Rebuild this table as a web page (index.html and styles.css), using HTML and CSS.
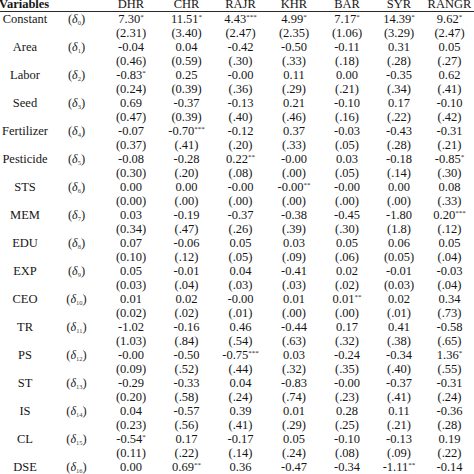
FILE: index.html
```html
<!DOCTYPE html>
<html>
<head>
<meta charset="utf-8">
<link rel="stylesheet" href="styles.css">
</head>
<body>
<div class="tbl">
  <div class="row head"><span class="vh">Variables</span><span></span><span>DHR</span><span>CHR</span><span>RAJR</span><span>KHR</span><span>BAR</span><span>SYR</span><span>RANGR</span></div>
  <div class="body">
    <div class="row"><span>Constant</span><span class="d">(<i>δ</i><sub>0</sub>)</span><span>7.30<sup>*</sup></span><span>11.51<sup>*</sup></span><span>4.43<sup>***</sup></span><span>4.99<sup>*</sup></span><span>7.17<sup>*</sup></span><span>14.39<sup>*</sup></span><span>9.62<sup>*</sup></span></div>
    <div class="row"><span></span><span></span><span>(2.31)</span><span>(3.40)</span><span>(2.47)</span><span>(2.35)</span><span>(1.06)</span><span>(3.29)</span><span>(2.47)</span></div>

    <div class="row"><span>Area</span><span class="d">(<i>δ</i><sub>1</sub>)</span><span>-0.04</span><span>0.04</span><span>-0.42</span><span>-0.50</span><span>-0.11</span><span>0.31</span><span>0.05</span></div>
    <div class="row"><span></span><span></span><span>(0.46)</span><span>(0.59)</span><span>(.30)</span><span>(.33)</span><span>(.18)</span><span>(.28)</span><span>(.27)</span></div>

    <div class="row"><span>Labor</span><span class="d">(<i>δ</i><sub>2</sub>)</span><span>-0.83<sup>*</sup></span><span>0.25</span><span>-0.00</span><span>0.11</span><span>0.00</span><span>-0.35</span><span>0.62</span></div>
    <div class="row"><span></span><span></span><span>(0.24)</span><span>(0.39)</span><span>(.36)</span><span>(.29)</span><span>(.21)</span><span>(.34)</span><span>(.41)</span></div>

    <div class="row"><span>Seed</span><span class="d">(<i>δ</i><sub>3</sub>)</span><span>0.69</span><span>-0.37</span><span>-0.13</span><span>0.21</span><span>-0.10</span><span>0.17</span><span>-0.10</span></div>
    <div class="row"><span></span><span></span><span>(0.47)</span><span>(0.39)</span><span>(.40)</span><span>(.46)</span><span>(.16)</span><span>(.22)</span><span>(.42)</span></div>

    <div class="row"><span>Fertilizer</span><span class="d">(<i>δ</i><sub>4</sub>)</span><span>-0.07</span><span>-0.70<sup>***</sup></span><span>-0.12</span><span>0.37</span><span>-0.03</span><span>-0.43</span><span>-0.31</span></div>
    <div class="row"><span></span><span></span><span>(0.37)</span><span>(.41)</span><span>(.20)</span><span>(.33)</span><span>(.05)</span><span>(.28)</span><span>(.21)</span></div>

    <div class="row"><span>Pesticide</span><span class="d">(<i>δ</i><sub>5</sub>)</span><span>-0.08</span><span>-0.28</span><span>0.22<sup>**</sup></span><span>-0.00</span><span>0.03</span><span>-0.18</span><span>-0.85<sup>*</sup></span></div>
    <div class="row"><span></span><span></span><span>(0.30)</span><span>(.20)</span><span>(.08)</span><span>(.00)</span><span>(.05)</span><span>(.14)</span><span>(.30)</span></div>

    <div class="row"><span>STS</span><span class="d">(<i>δ</i><sub>6</sub>)</span><span>0.00</span><span>0.00</span><span>-0.00</span><span>-0.00<sup>**</sup></span><span>-0.00</span><span>0.00</span><span>0.08</span></div>
    <div class="row"><span></span><span></span><span>(0.00)</span><span>(.00)</span><span>(.00)</span><span>(.00)</span><span>(.00)</span><span>(.00)</span><span>(.33)</span></div>

    <div class="row"><span>MEM</span><span class="d">(<i>δ</i><sub>7</sub>)</span><span>0.03</span><span>-0.19</span><span>-0.37</span><span>-0.38</span><span>-0.45</span><span>-1.80</span><span>0.20<sup>***</sup></span></div>
    <div class="row"><span></span><span></span><span>(0.34)</span><span>(.47)</span><span>(.26)</span><span>(.39)</span><span>(.30)</span><span>(1.8)</span><span>(.12)</span></div>

    <div class="row"><span>EDU</span><span class="d">(<i>δ</i><sub>8</sub>)</span><span>0.07</span><span>-0.06</span><span>0.05</span><span>0.03</span><span>0.05</span><span>0.06</span><span>0.05</span></div>
    <div class="row"><span></span><span></span><span>(0.10)</span><span>(.12)</span><span>(.05)</span><span>(.09)</span><span>(.06)</span><span>(0.05)</span><span>(.04)</span></div>

    <div class="row"><span>EXP</span><span class="d">(<i>δ</i><sub>9</sub>)</span><span>0.05</span><span>-0.01</span><span>0.04</span><span>-0.41</span><span>0.02</span><span>-0.01</span><span>-0.03</span></div>
    <div class="row"><span></span><span></span><span>(0.03)</span><span>(.04)</span><span>(.03)</span><span>(.03)</span><span>(.02)</span><span>(0.03)</span><span>(.04)</span></div>

    <div class="row"><span>CEO</span><span class="d">(<i>δ</i><sub>10</sub>)</span><span>0.01</span><span>0.02</span><span>-0.00</span><span>0.01</span><span>0.01<sup>**</sup></span><span>0.02</span><span>0.34</span></div>
    <div class="row"><span></span><span></span><span>(0.02)</span><span>(.02)</span><span>(.01)</span><span>(.00)</span><span>(.00)</span><span>(.01)</span><span>(.73)</span></div>

    <div class="row"><span>TR</span><span class="d">(<i>δ</i><sub>11</sub>)</span><span>-1.02</span><span>-0.16</span><span>0.46</span><span>-0.44</span><span>0.17</span><span>0.41</span><span>-0.58</span></div>
    <div class="row"><span></span><span></span><span>(1.03)</span><span>(.84)</span><span>(.54)</span><span>(.63)</span><span>(.32)</span><span>(.38)</span><span>(.65)</span></div>

    <div class="row"><span>PS</span><span class="d">(<i>δ</i><sub>12</sub>)</span><span>-0.00</span><span>-0.50</span><span>-0.75<sup>***</sup></span><span>0.03</span><span>-0.24</span><span>-0.34</span><span>1.36<sup>*</sup></span></div>
    <div class="row"><span></span><span></span><span>(0.09)</span><span>(.52)</span><span>(.44)</span><span>(.32)</span><span>(.35)</span><span>(.40)</span><span>(.55)</span></div>

    <div class="row"><span>ST</span><span class="d">(<i>δ</i><sub>13</sub>)</span><span>-0.29</span><span>-0.33</span><span>0.04</span><span>-0.83</span><span>-0.00</span><span>-0.37</span><span>-0.31</span></div>
    <div class="row"><span></span><span></span><span>(0.20)</span><span>(.58)</span><span>(.24)</span><span>(.74)</span><span>(.23)</span><span>(.41)</span><span>(.24)</span></div>

    <div class="row"><span>IS</span><span class="d">(<i>δ</i><sub>14</sub>)</span><span>0.04</span><span>-0.57</span><span>0.39</span><span>0.01</span><span>0.28</span><span>0.11</span><span>-0.36</span></div>
    <div class="row"><span></span><span></span><span>(0.23)</span><span>(.56)</span><span>(.41)</span><span>(.29)</span><span>(.25)</span><span>(.21)</span><span>(.28)</span></div>

    <div class="row"><span>CL</span><span class="d">(<i>δ</i><sub>15</sub>)</span><span>-0.54<sup>*</sup></span><span>0.17</span><span>-0.17</span><span>0.05</span><span>-0.10</span><span>-0.13</span><span>0.19</span></div>
    <div class="row"><span></span><span></span><span>(0.11)</span><span>(.22)</span><span>(.14)</span><span>(.24)</span><span>(.08)</span><span>(.09)</span><span>(.22)</span></div>

    <div class="row"><span>DSE</span><span class="d">(<i>δ</i><sub>16</sub>)</span><span>0.00</span><span>0.69<sup>**</sup></span><span>0.36</span><span>-0.47</span><span>-0.34</span><span>-1.11<sup>**</sup></span><span>-0.14</span></div>
  </div>
</div>
</body>
</html>
```

FILE: styles.css
```css
html, body {
  margin: 0;
  padding: 0;
  background: #ffffff;
  overflow: hidden;
}
body {
  width: 474px;
  height: 474px;
  font-family: "Liberation Serif", "Times New Roman", serif;
  font-size: 12.5px;
  color: #161616;
}
.tbl {
  margin-top: -3px;
  width: 474px;
}
.row {
  display: grid;
  grid-template-columns: 50px 53px 56px 55px 53px 54px 52px 52px 49px;
  height: 14px;
  line-height: 14px;
}
.row span {
  text-align: center;
  white-space: nowrap;
}
.head {
  border-bottom: 1px solid #2a2a2a;
}
.head .vh {
  text-align: left;
  font-weight: bold;
  margin-left: -1px;
  overflow: visible;
}
sup {
  font-size: 7px;
  line-height: 0;
  vertical-align: 4px;
}
.d {
  color: #222;
}
.d i {
  font-style: italic;
  font-size: 12px;
}
.d sub {
  font-size: 6.5px;
  line-height: 0;
  vertical-align: -2px;
  color: #444;
}
```
